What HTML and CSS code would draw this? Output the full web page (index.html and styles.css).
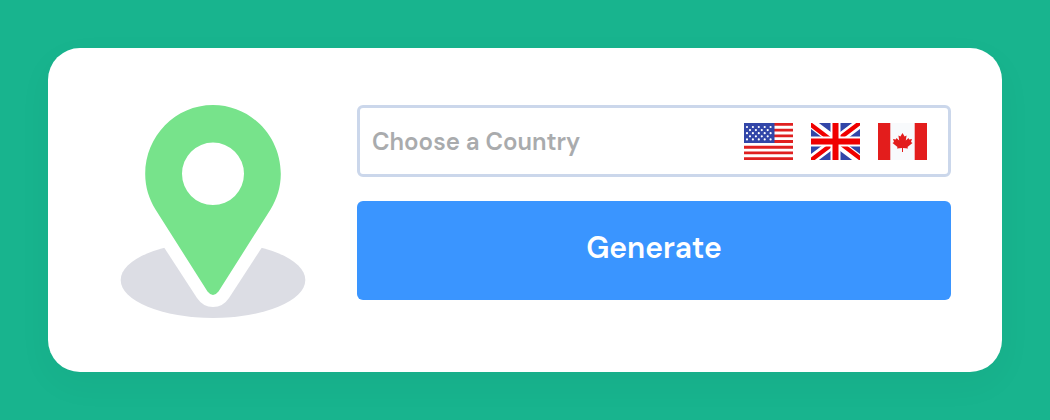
FILE: index.html
```
<!DOCTYPE html>
<html lang="en">
<head>
    <meta charset="UTF-8">
    <meta name="viewport" content="width=device-width, initial-scale=1.0">
    <title>Choose a Country</title>
    <link rel="stylesheet" href="styles.css">
</head>
<body>
    <main class="card">
        <svg class="pin" viewBox="0 0 186 214" aria-hidden="true">
            <ellipse cx="93" cy="175" rx="92.3" ry="38" fill="#dcdde4"/>
            <path d="M36 130L77 193Q83 202 93 202T109 193L150 130Z" fill="#fff"/>
            <path fill="#77e38b" fill-rule="evenodd" d="M93 0C130.500 0 160.800 31 160.800 69C160.800 82 157 94 150.500 104.500L98.500 186.500Q93 193.500 87.500 186.500L35.500 104.500C29 94 25.200 82 25.200 69C25.200 31 55.500 0 93 0ZM93 37.500A31 31.300 0 1 0 93 100.100A31 31.300 0 1 0 93 37.500Z"/>
        </svg>
        <form class="country-form">
            <div class="country-field">
                <input type="text" class="country-input" name="country" placeholder="Choose a Country" aria-label="Choose a Country">
                <div class="flags" aria-hidden="true">
                    <svg class="flag" viewBox="0 0 49 37">
                        <path fill="#fff" d="M0 0H49V37H0Z"/>
                        <path stroke="#e02020" stroke-width="2.850" d="M0 1.420H49M0 7.100H49M0 12.800H49M0 18.500H49M0 24.200H49M0 29.900H49M0 35.580H49"/>
                        <path fill="#3246a8" d="M0 0H30.500V20H0Z"/>
                        <g stroke="#fff" stroke-width="2.200" stroke-linecap="round" stroke-dasharray="0 5.900">
                            <path d="M3 4H29M3 10.200H29M3 16.400H29"/>
                            <path d="M6 7.100H26M6 13.300H26"/>
                        </g>
                    </svg>
                    <svg class="flag" viewBox="0 0 49 37">
                        <path fill="#3246a8" d="M0 0H49V37H0Z"/>
                        <path stroke="#fff" stroke-width="9.500" d="M0 0L49 37M49 0L0 37"/>
                        <path stroke="#f00000" stroke-width="4.200" d="M-1 1L24 20M50 -1L25 18M50 36L25 17M-1 38L24 19"/>
                        <path stroke="#fff" stroke-width="10" d="M24.500 0V37M0 18.500H49"/>
                        <path stroke="#f00000" stroke-width="6" d="M24.500 0V37M0 18.500H49"/>
                    </svg>
                    <svg class="flag" viewBox="0 0 49 37">
                        <path fill="#f8fafc" d="M0 0H49V37H0Z"/>
                        <path fill="#e31d1c" d="M0 0H12.300V37H0ZM36.700 0H49V37H36.700Z"/>
                        <path fill="#e31d1c" d="M24.500 10L26.600 13.500L28.600 12.500L27.800 17.500L30.500 15L31.200 16.500L34 16L33 19L34.500 20L29.500 24L30 25.500L25 25V29H24V25L19 25.500L19.500 24L14.500 20L16 19L15 16L17.800 16.500L18.500 15L21.200 17.500L20.400 12.500L22.400 13.500Z"/>
                    </svg>
                </div>
            </div>
            <button type="button" class="generate-btn">Generate</button>
        </form>
    </main>
</body>
</html>
```
FILE: styles.css
```
* {
    box-sizing: border-box;
}
body {
    font-family: 'DM Sans', Inter, sans-serif;
    margin: 0;
    padding: 48px;
    background: #18b48e;
}
.card {
    display: flex;
    align-items: flex-start;
    gap: 51px;
    padding: 57px 51px 53px 72px;
    background: white;
    border-radius: 32px;
    box-shadow: 0 12px 36px rgba(0,0,0,0.04);
}
.pin {
    flex: none;
    width: 186px;
}
.country-form {
    flex: 1;
    display: flex;
    flex-direction: column;
    gap: 24px;
}
.country-field {
    display: flex;
    align-items: center;
    height: 72px;
    padding: 0 21px 0 12px;
    border: 3px solid #cbd7eb;
    border-radius: 6px;
}
.country-input {
    flex: 1;
    min-width: 0;
    padding: 0;
    border: none;
    outline: none;
    background: none;
    font-family: inherit;
    font-size: 24px;
    font-weight: 600;
    color: #333;
}
.country-input::placeholder {
    color: #a9abad;
}
.flags {
    display: flex;
    gap: 18px;
}
.flag {
    width: 49px;
    height: 37px;
}
.generate-btn {
    padding: 29px 20px 34px;
    border: none;
    border-radius: 6px;
    background: #3a95ff;
    color: white;
    font-family: inherit;
    font-size: 30px;
    font-weight: 600;
    line-height: 36px;
    cursor: pointer;
}
.generate-btn:hover {
    background: #2484f2;
}
```
